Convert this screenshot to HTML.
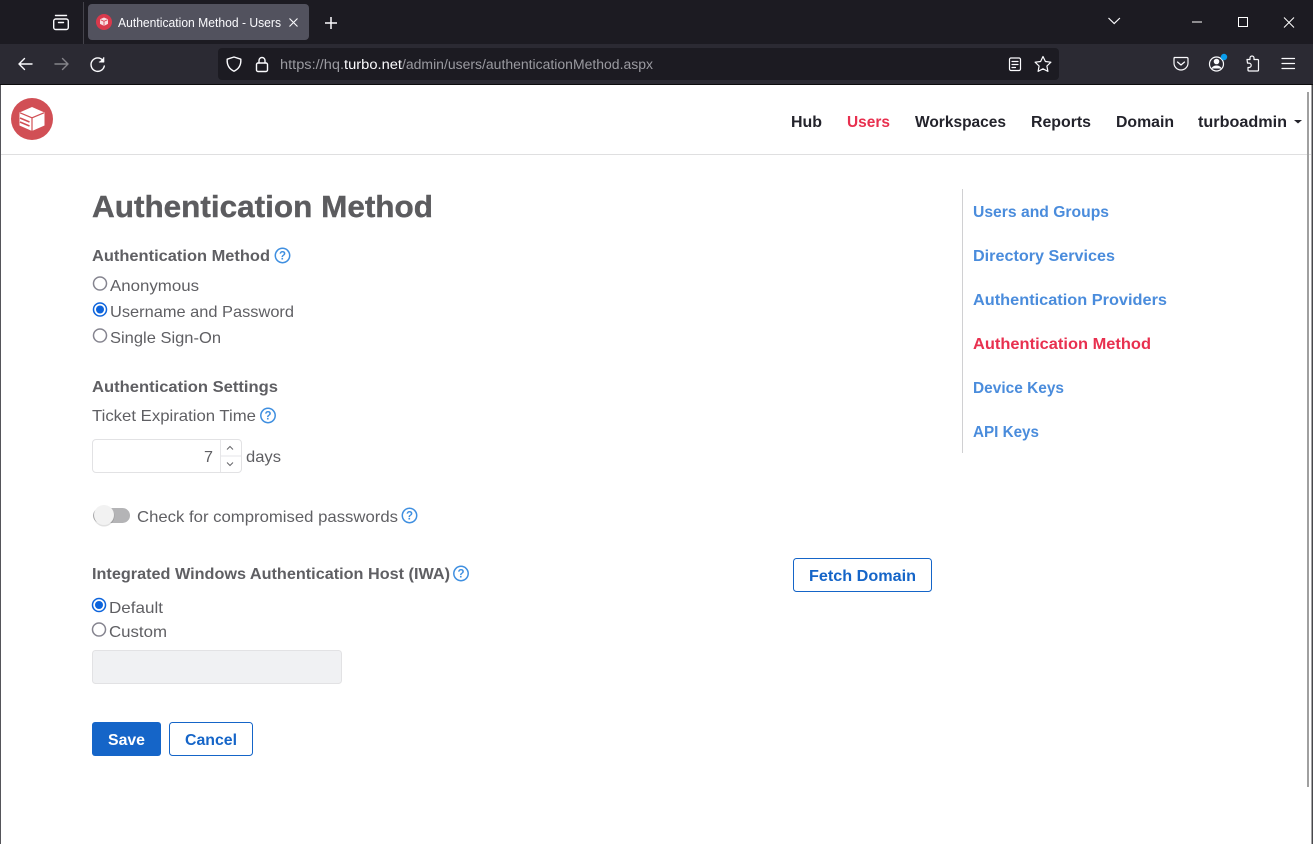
<!DOCTYPE html>
<html lang="en"><head><meta charset="utf-8"><title>Authentication Method - Users</title>
<style>
html,body{margin:0;padding:0;width:1313px;height:844px;overflow:hidden;background:#fff}
svg{display:block;font-family:"Liberation Sans",sans-serif}
.n{font-size:16px;font-weight:700;fill:#23232b}
.l{font-size:16px;fill:#5f5f63}
.b{font-size:16px;font-weight:700;fill:#5f5f63}
.s{font-size:16px;font-weight:700;fill:#4a8cdc}
.i{fill:none;stroke:#fbfbfe;stroke-width:1.4;stroke-linecap:round;stroke-linejoin:round}
.h{fill:none;stroke:#3f8fe0;stroke-width:1.5}
.q{font-size:11.5px;font-weight:700;fill:#3f8fe0;text-anchor:middle}
</style></head><body>
<svg width="1313" height="844" viewBox="0 0 1313 844" xmlns="http://www.w3.org/2000/svg">
<rect width="1313" height="844" fill="#fff"/>
<!-- tab bar -->
<rect width="1313" height="44" fill="#1c1b22"/>
<rect x="0" y="44" width="1313" height="40" fill="#2b2a33"/>
<rect x="0" y="84" width="1313" height="1" fill="#0c0c0d"/>
<rect x="83" y="2" width="1" height="42" fill="#44434b"/>
<!-- firefox view -->
<g class="i"><rect x="53.700" y="19" width="14.600" height="10.500" rx="2"/><path d="M55.500 15.500h11M58.500 22.500h5"/></g>
<rect x="88" y="4" width="221" height="36" rx="4" fill="#52525e"/>
<circle cx="104" cy="22" r="8" fill="#d9394c"/>
<path d="M104 17.500l4 1.800v4.600l-4 2-4-2v-4.600z" fill="#f8dfe2"/>
<path d="M100.500 19.800l3.500 1.500 3.500-1.500M104 21.300v4.200" fill="none" stroke="#d9394c" stroke-width=".8"/>
<text x="118" y="27" font-size="12.500" fill="#fbfbfe" textLength="163" lengthAdjust="spacingAndGlyphs">Authentication Method - Users</text>
<path d="M289.500 18.500l8 8M297.500 18.500l-8 8" stroke="#fbfbfe" stroke-width="1.100" fill="none"/>
<path d="M331 17v12M325 23h12" stroke="#fbfbfe" stroke-width="1.500" fill="none"/>
<!-- window controls -->
<path d="M1108.500 18l5.700 5.500 5.700-5.500" fill="none" stroke="#fbfbfe" stroke-width="1.200"/>
<rect x="1192" y="21.500" width="10" height="1" fill="#fff"/>
<rect x="1238.500" y="17.500" width="9" height="9" fill="none" stroke="#fff" stroke-width="1"/>
<path d="M1284 17.500l10 10M1294 17.500l-10 10" stroke="#fff" stroke-width="1" fill="none"/>
<!-- nav toolbar -->
<g class="i">
<path d="M32 64H19M24.500 58.500L19 64l5.500 5.500"/>
<path d="M68 64H55M62.500 58.500L68 64l-5.500 5.500" stroke="#85848a"/>
<path d="M103 60.500A6.700 6.700 0 1 0 104.300 66"/><path d="M103.800 57.500v4.500h-4.500" fill="#fbfbfe" stroke-width="1"/>
</g>
<rect x="218" y="48" width="841" height="32" rx="4" fill="#1c1b22"/>
<g class="i" stroke-width="1.400">
<path d="M234 57.500l6.800 2.200c.4 5.500-2 9.800-6.800 12-4.800-2.200-7.200-6.500-6.800-12z" transform="translate(0 -.5)"/>
<rect x="256.500" y="63" width="11" height="8.500" rx="1.500"/><path d="M259 63v-2.500a3 3 0 0 1 6 0V63"/>
</g>
<text x="280" y="69" font-size="13.500" fill="#9a9aa0" textLength="64" lengthAdjust="spacingAndGlyphs">https://hq.</text>
<text x="344" y="69" font-size="13.500" fill="#fbfbfe" textLength="58" lengthAdjust="spacingAndGlyphs">turbo.net</text>
<text x="402" y="69" font-size="13.500" fill="#9a9aa0" textLength="251" lengthAdjust="spacingAndGlyphs">/admin/users/authenticationMethod.aspx</text>
<g class="i" style="stroke-width:1.200">
<rect x="1009.500" y="58" width="11" height="12.500" rx="1.500"/><path d="M1012 61.500h6M1012 64.500h6M1012 67.500h3.500"/>
<path d="M1043 56.500l2.400 5 5.500.7-4 3.800 1 5.400-4.900-2.600-4.900 2.600 1-5.400-4-3.800 5.500-.7z"/>
<path d="M1174.200 57.500h12.600a1.200 1.200 0 0 1 1.200 1.200v4.300a7 7 0 0 1-14 0v-4.300a1.200 1.200 0 0 1 1.200-1.200zM1177.500 62l3.500 3 3.500-3"/>
<circle cx="1216.500" cy="64" r="7"/>
<path d="M1212 68.500c1-2 2.500-2.500 4.500-2.500s3.500.5 4.500 2.500" fill="#fbfbfe" stroke-width="1"/>
<circle cx="1216.500" cy="61.500" r="2.300" fill="#fbfbfe" stroke-width="1"/>
<path d="M1247 60.500h3v-1.500a2 2 0 0 1 4 0v1.500h3.500a1 1 0 0 1 1 1v9.500a1 1 0 0 1-1 1H1249a1 1 0 0 1-1-1v-2.500h1a2.200 2.200 0 0 0 0-4.400h-1.500z" transform="translate(0 -1)"/>
<path d="M1282 58.500h12.500M1282 63.500h12.500M1282 68.500h12.500"/>
</g>
<circle cx="1224" cy="57" r="3.200" fill="#0a9dec"/>
<!-- page header -->
<rect x="0" y="85" width="1" height="759" fill="#55555a"/>
<rect x="1311.500" y="85" width="1.500" height="759" fill="#48484c"/>
<rect x="1" y="154" width="1310" height="1" fill="#dfdfe0"/>
<circle cx="32" cy="119" r="21" fill="#d14f55"/>
<path d="M32 107l12.500 5.500v13L32 131l-12.500-5.500v-13z" fill="#fff"/>
<path d="M20 112.800l12 5 12-5M32 117.800V131" fill="none" stroke="#d14f55" stroke-width="1.200"/>
<path d="M20 118l9.500 4M20 122l9.500 4" fill="none" stroke="#d14f55" stroke-width="1.500"/>
<g>
<text class="n" x="791" y="127" textLength="31" lengthAdjust="spacingAndGlyphs">Hub</text>
<text class="n" x="847" y="127" textLength="43" lengthAdjust="spacingAndGlyphs" style="fill:#e8304f">Users</text>
<text class="n" x="915" y="127" textLength="91" lengthAdjust="spacingAndGlyphs">Workspaces</text>
<text class="n" x="1031" y="127" textLength="60" lengthAdjust="spacingAndGlyphs">Reports</text>
<text class="n" x="1116" y="127" textLength="58" lengthAdjust="spacingAndGlyphs">Domain</text>
<text class="n" x="1198" y="127" textLength="89" lengthAdjust="spacingAndGlyphs">turboadmin</text>
<path d="M1294 120h8l-4 3.500z" fill="#23232b"/>
</g>
<rect x="1307" y="92" width="2" height="695" fill="#a0a0a0"/>
<!-- main -->
<text x="92" y="217" font-size="31" font-weight="700" fill="#5c5c5f" stroke="#5c5c5f" stroke-width=".4" textLength="341" lengthAdjust="spacingAndGlyphs">Authentication Method</text>
<text class="b" x="92" y="261" textLength="178" lengthAdjust="spacingAndGlyphs">Authentication Method</text>
<circle class="h" cx="282.500" cy="255.500" r="7.200"/><text class="q" x="282.500" y="259.700">?</text>
<circle cx="100" cy="283.500" r="6.500" fill="#fff" stroke="#85848f" stroke-width="1.500"/>
<text class="l" x="110" y="291" textLength="89" lengthAdjust="spacingAndGlyphs">Anonymous</text>
<circle cx="100" cy="309.500" r="6.500" fill="#fff" stroke="#0d64dc" stroke-width="1.500"/><circle cx="100" cy="309.500" r="4" fill="#0d64dc"/>
<text class="l" x="110" y="317" textLength="184" lengthAdjust="spacingAndGlyphs">Username and Password</text>
<circle cx="100" cy="335.500" r="6.500" fill="#fff" stroke="#85848f" stroke-width="1.500"/>
<text class="l" x="110" y="343" textLength="111" lengthAdjust="spacingAndGlyphs">Single Sign-On</text>
<text class="b" x="92" y="392" textLength="186" lengthAdjust="spacingAndGlyphs">Authentication Settings</text>
<text class="l" x="92" y="421" textLength="164" lengthAdjust="spacingAndGlyphs">Ticket Expiration Time</text>
<circle class="h" cx="268" cy="415.500" r="7.200"/><text class="q" x="268" y="419.700">?</text>
<rect x="92.500" y="439.500" width="149" height="33" rx="3.500" fill="#fff" stroke="#e2e2e4"/>
<path d="M220.500 440v32M221 456h20" stroke="#e6e6e8" fill="none"/>
<path d="M227 449.500l3-3 3 3M227 462.500l3 3 3-3" stroke="#66666a" fill="none"/>
<text class="l" x="204" y="462" textLength="9" lengthAdjust="spacingAndGlyphs">7</text>
<text class="l" x="246" y="462" textLength="35" lengthAdjust="spacingAndGlyphs">days</text>
<rect x="93" y="508" width="37" height="15" rx="7.500" fill="#b4b4b6"/>
<circle cx="104" cy="516" r="10.500" fill="#000" opacity=".12"/>
<circle cx="104" cy="515" r="10" fill="#f2f2f2"/>
<text class="l" x="137" y="522" textLength="261" lengthAdjust="spacingAndGlyphs">Check for compromised passwords</text>
<circle class="h" cx="409.500" cy="515.500" r="7.200"/><text class="q" x="409.500" y="519.700">?</text>
<text class="b" x="92" y="579" textLength="358" lengthAdjust="spacingAndGlyphs">Integrated Windows Authentication Host (IWA)</text>
<circle class="h" cx="461" cy="573.500" r="7.200"/><text class="q" x="461" y="577.700">?</text>
<rect x="793.500" y="558.500" width="138" height="33" rx="3" fill="#fff" stroke="#1565c8"/>
<text x="809" y="581" font-size="16" font-weight="700" fill="#1565c8" textLength="107" lengthAdjust="spacingAndGlyphs">Fetch Domain</text>
<circle cx="99" cy="605" r="6.500" fill="#fff" stroke="#0d64dc" stroke-width="1.500"/><circle cx="99" cy="605" r="4" fill="#0d64dc"/>
<text class="l" x="109" y="613" textLength="54" lengthAdjust="spacingAndGlyphs">Default</text>
<circle cx="99" cy="629.500" r="6.500" fill="#fff" stroke="#85848f" stroke-width="1.500"/>
<text class="l" x="109" y="637" textLength="58" lengthAdjust="spacingAndGlyphs">Custom</text>
<rect x="92.500" y="650.500" width="249" height="33" rx="3" fill="#f0f1f3" stroke="#e2e2e4"/>
<rect x="92" y="722" width="69" height="34" rx="3" fill="#1565c8"/>
<text x="108" y="745" font-size="16" font-weight="700" fill="#fff" textLength="37" lengthAdjust="spacingAndGlyphs">Save</text>
<rect x="169.500" y="722.500" width="83" height="33" rx="3" fill="#fff" stroke="#1565c8"/>
<text x="185" y="745" font-size="16" font-weight="700" fill="#1565c8" textLength="52" lengthAdjust="spacingAndGlyphs">Cancel</text>
<!-- side nav -->
<rect x="962" y="189" width="1" height="264" fill="#d0d0d2"/>
<text class="s" x="973" y="217" textLength="136" lengthAdjust="spacingAndGlyphs">Users and Groups</text>
<text class="s" x="973" y="261" textLength="142" lengthAdjust="spacingAndGlyphs">Directory Services</text>
<text class="s" x="973" y="305" textLength="194" lengthAdjust="spacingAndGlyphs">Authentication Providers</text>
<text class="s" x="973" y="349" textLength="178" lengthAdjust="spacingAndGlyphs" style="fill:#e8304f">Authentication Method</text>
<text class="s" x="973" y="393" textLength="91" lengthAdjust="spacingAndGlyphs">Device Keys</text>
<text class="s" x="973" y="437" textLength="66" lengthAdjust="spacingAndGlyphs">API Keys</text>
</svg>
</body></html>
